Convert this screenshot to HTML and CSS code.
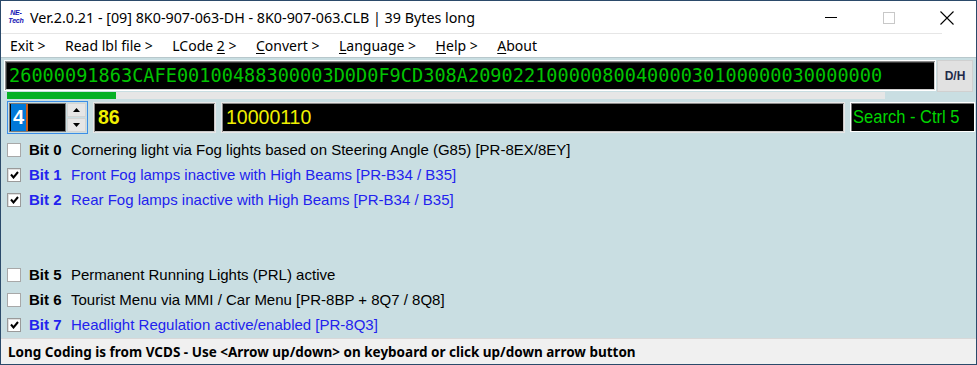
FILE: index.html
```html
<!DOCTYPE html>
<html>
<head>
<meta charset="utf-8">
<link rel="stylesheet" href="styles.css">
</head>
<body>
<div class="window">
  <div class="titlebar">
    <div class="logo"><span>NE-</span><span>Tech</span></div>
    <div class="title">Ver.2.0.21 - [09] 8K0-907-063-DH - 8K0-907-063.CLB | 39 Bytes long</div>
    <div class="controls">
      <svg class="ctl" width="58" height="32" viewBox="0 0 58 32"><line x1="23" y1="16.5" x2="35" y2="16.5" stroke="#000" stroke-width="1"/></svg>
      <svg class="ctl" width="58" height="32" viewBox="0 0 58 32"><rect x="23.5" y="11.5" width="11" height="11" fill="none" stroke="#c8c8c8" stroke-width="1"/></svg>
      <svg class="ctl" width="58" height="32" viewBox="0 0 58 32"><path d="M22.5 10.5 L35.5 23.5 M35.5 10.5 L22.5 23.5" stroke="#000" stroke-width="1.1" fill="none"/></svg>
    </div>
  </div>
  <div class="menubar">
    <span class="mi">Exit &gt;</span>
    <span class="mi">Read lbl file &gt;</span>
    <span class="mi">LCode <u>2</u> &gt;</span>
    <span class="mi"><u>C</u>onvert &gt;</span>
    <span class="mi"><u>L</u>anguage &gt;</span>
    <span class="mi"><u>H</u>elp &gt;</span>
    <span class="mi"><u>A</u>bout</span>
  </div>
  <div class="content">
    <div class="hexrow">
      <div class="hex">26000091863CAFE00100488300003D0D0F9CD308A2090221000008004000030100000030000000</div>
      <div class="dh">D/H</div>
    </div>
    <div class="progress"><div class="fill"></div></div>
    <div class="valrow">
      <div class="spin">
        <div class="spinfield"><span class="sel">4</span><span class="caret"></span></div>
        <div class="spinbtns">
          <div class="sb"><svg width="7" height="4" viewBox="0 0 7 4"><path d="M0 4 L3.5 0 L7 4 Z" fill="#000"/></svg></div>
          <div class="sb"><svg width="7" height="4" viewBox="0 0 7 4"><path d="M0 0 L3.5 4 L7 0 Z" fill="#000"/></svg></div>
        </div>
      </div>
      <div class="field dec">86</div>
      <div class="field bin">10000110</div>
      <div class="search"><span class="stext">Search - Ctrl 5</span></div>
    </div>
    <div class="bits">
      <div class="bit"><span class="cb"></span><span class="bn">Bit 0</span><span class="bt">Cornering light via Fog lights based on Steering Angle (G85) [PR-8EX/8EY]</span></div>
      <div class="bit on"><span class="cb"><svg width="9" height="8" viewBox="0 0 9 8"><path d="M1 3.5 L3.5 6.5 L8 1" stroke="#000" stroke-width="2" fill="none"/></svg></span><span class="bn">Bit 1</span><span class="bt">Front Fog lamps inactive with High Beams [PR-B34 / B35]</span></div>
      <div class="bit on"><span class="cb"><svg width="9" height="8" viewBox="0 0 9 8"><path d="M1 3.5 L3.5 6.5 L8 1" stroke="#000" stroke-width="2" fill="none"/></svg></span><span class="bn">Bit 2</span><span class="bt">Rear Fog lamps inactive with High Beams [PR-B34 / B35]</span></div>
      <div class="bit empty"></div>
      <div class="bit empty"></div>
      <div class="bit"><span class="cb"></span><span class="bn">Bit 5</span><span class="bt">Permanent Running Lights (PRL) active</span></div>
      <div class="bit"><span class="cb"></span><span class="bn">Bit 6</span><span class="bt">Tourist Menu via MMI / Car Menu [PR-8BP + 8Q7 / 8Q8]</span></div>
      <div class="bit on"><span class="cb"><svg width="9" height="8" viewBox="0 0 9 8"><path d="M1 3.5 L3.5 6.5 L8 1" stroke="#000" stroke-width="2" fill="none"/></svg></span><span class="bn">Bit 7</span><span class="bt">Headlight Regulation active/enabled [PR-8Q3]</span></div>
    </div>
  </div>
  <div class="status">Long Coding is from VCDS - Use &lt;Arrow up/down&gt; on keyboard or click up/down arrow button</div>
</div>
</body>
</html>
```

FILE: styles.css
```css
* { box-sizing: border-box; }
html, body { margin: 0; padding: 0; }
body { width: 977px; height: 365px; overflow: hidden; background: #fff; }

.window {
  width: 977px;
  height: 365px;
  border: 1px solid #2b4a6a;
  display: flex;
  flex-direction: column;
  background: #fff;
  font-family: "Noto Sans", "Open Sans", sans-serif;
}

.titlebar {
  height: 32px;
  display: flex;
  align-items: center;
  background: #fff;
  flex: none;
}
.logo {
  width: 20px;
  margin-left: 5px;
  display: flex;
  flex-direction: column;
  align-items: center;
  font-family: "Liberation Sans", sans-serif;
  font-style: italic;
  font-weight: bold;
  font-size: 7px;
  line-height: 8px;
  color: #1414b4;
  letter-spacing: -0.2px;
}
.title {
  margin-left: 4px;
  font-size: 14.3px;
  color: #000;
  white-space: nowrap;
  flex: 1;
}
.controls { display: flex; align-items: center; height: 32px; }
.ctl { display: block; }

.menubar {
  height: 24px;
  flex: none;
  display: flex;
  align-items: center;
  gap: 19.5px;
  padding-left: 9px;
  border-top: 1px solid #e6e6e6;
  margin-right: 34px;
  font-size: 14px;
  color: #000;
  background: #fff;
}
.mi { white-space: nowrap; }
.mi u { text-decoration-thickness: 1px; text-underline-offset: 2px; }

.content {
  flex: 1;
  background: #c9dee2;
  border-top: 1px solid #b8c8cc;
  display: flex;
  flex-direction: column;
}

.hexrow {
  display: flex;
  align-items: center;
  height: 33px;
  padding-left: 3px;
  margin-top: 1px;
}
.hex {
  width: 932px;
  height: 31px;
  background: #000;
  border: 1px solid #fff;
  box-shadow: inset 1px 1px 0 #8a8a8a, inset -1px -1px 0 #d0d0d0, inset 2px 2px 0 #3a3a3a;
  color: #00c400;
  font-family: "DejaVu Sans Mono", monospace;
  font-size: 18.6px;
  line-height: 29px;
  padding-left: 4px;
  white-space: nowrap;
  overflow: hidden;
}
.dh {
  width: 36px;
  height: 32px;
  margin-left: 1px;
  background: #e1e1e1;
  border: 1px solid #d0d0d0;
  display: flex;
  align-items: center;
  justify-content: center;
  font-family: "Liberation Sans", sans-serif;
  font-weight: bold;
  font-size: 12px;
  color: #1f2a4a;
}

.progress {
  margin-left: 6px;
  width: 878px;
  height: 7px;
  background: #e6e6e6;
}
.progress .fill {
  width: 109px;
  height: 7px;
  background: #06b025;
}

.valrow {
  display: flex;
  align-items: center;
  height: 34px;
  margin-top: 1px;
  padding-left: 6px;
}
.spin {
  width: 81px;
  height: 33px;
  border: 1px solid #3c8ee6;
  display: flex;
  align-items: center;
  padding: 1px;
  background: #c9dee2;
}
.spinfield {
  width: 57px;
  height: 29px;
  background: #000;
  display: flex;
  align-items: center;
  padding-left: 1px;
  border: 1px solid #7a7a7a;
}
.sel {
  display: inline-block;
  background: #0078d7;
  color: #fff;
  font-family: "Liberation Sans", sans-serif;
  font-weight: bold;
  font-size: 20px;
  line-height: 27px;
  width: 15px;
  text-align: center;
}
.caret { display: inline-block; width: 2px; height: 27px; background: #c85a18; }
.spinbtns {
  display: flex;
  flex-direction: column;
  margin-left: 1px;
  gap: 1px;
}
.sb {
  width: 19px;
  height: 14px;
  background: #e6e6e6;
  border: 1px solid #d4d4d4;
  display: flex;
  align-items: center;
  justify-content: center;
}
.sb svg { display: block; }

.field {
  height: 31px;
  background: #000;
  border: 1px solid #e8e8e8;
  box-shadow: inset 1px 1px 0 #8a8a8a, inset -1px -1px 0 #c8c8c8;
  color: #f0f000;
  font-family: "Liberation Sans", sans-serif;
  font-size: 19.5px;
  line-height: 29px;
  padding-left: 4px;
}
.dec { width: 123px; margin-left: 5px; font-weight: bold; }
.bin { width: 624px; margin-left: 5px; }
.search {
  width: 125px;
  height: 30px;
  margin-left: 5px;
  background: #000;
  border: 1px solid #fff;
  box-shadow: inset 1px 1px 0 #777;
  color: #00d400;
  font-family: "Liberation Sans", sans-serif;
  font-size: 19px;
  line-height: 28px;
  padding-left: 2px;
  white-space: nowrap;
  overflow: hidden;
}
.stext { display: inline-block; transform: scaleX(0.87); transform-origin: left center; }

.bits {
  display: flex;
  flex-direction: column;
  margin-top: 3px;
  padding-left: 6px;
}
.bit {
  height: 25px;
  display: flex;
  align-items: center;
  font-family: "Liberation Sans", sans-serif;
  font-size: 15px;
  color: #000;
  white-space: nowrap;
}
.bit.on { color: #2222ee; }
.cb {
  width: 14px;
  height: 14px;
  background: #fff;
  border: 1px solid #a8a8a8;
  display: flex;
  align-items: center;
  justify-content: center;
  flex: none;
}
.bit.on .cb { border-color: #9a9a9a; box-shadow: inset 1px 1px 0 #e0e0e0; }
.cb svg { display: block; }
.bn { font-weight: bold; margin-left: 8px; width: 42px; }

.status {
  height: 26px;
  flex: none;
  background: #f0f0f0;
  border-top: 1px solid #d8d8d8;
  display: flex;
  align-items: center;
  padding-left: 7px;
  font-weight: bold;
  font-size: 13.5px;
  color: #000;
  white-space: nowrap;
}
```
